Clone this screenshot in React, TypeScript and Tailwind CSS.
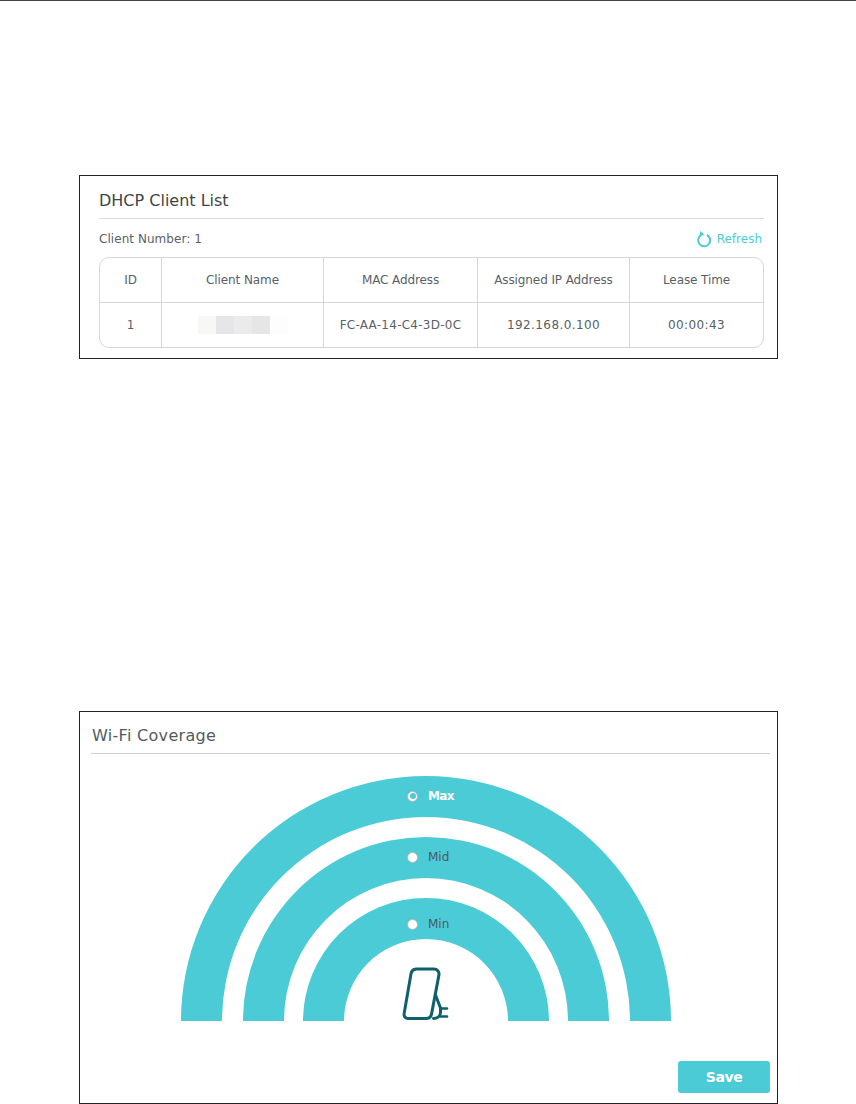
const cols = 'grid grid-cols-[62px_162px_154px_152px_1fr]'
const cell = 'flex items-center justify-center border-[#d6d6d6]'

const blurBlocks = ['bg-[#f7f7f5]', 'bg-[#e6e6e8]', 'bg-[#ebebeb]', 'bg-[#e6e6e6]', 'bg-[#fcfdfc]']

function RefreshIcon() {
	return (
		<svg width="16" height="18" viewBox="0 0 16 18" fill="none" className="shrink-0">
			<path d="M5 5.200a6 6 0 1 0 6-.2" stroke="#4acbd6" strokeWidth="2" />
			<path d="M4.200 1l4.300 3.600-5 2z" fill="#4acbd6" />
		</svg>
	)
}

function Radio({ label, active, className }: { label: string; active?: boolean; className: string }) {
	return (
		<div className={`absolute flex items-center gap-[10px] ${className}`}>
			<span className="flex h-[11px] w-[11px] items-center justify-center rounded-full border border-[#b9b3b8] bg-white">
				{active && <span className="h-[6px] w-[6px] rounded-full bg-[#4bccd7]" />}
			</span>
			<span className={`text-[12px] leading-[14px] ${active ? 'font-bold tracking-[-0.6px] text-white' : 'text-[#4c5a63]'}`}>{label}</span>
		</div>
	)
}

function Arcs() {
	return (
		<svg width="490" height="245" viewBox="0 0 490 245" fill="none" className="ml-[90px]">
			<path d="M0 245a245 245 0 0 1 490 0h-41a204 204 0 0 0-408 0z" fill="#4acbd6" />
			<path d="M62 245a183 184 0 0 1 366 0h-41a142 143 0 0 0-284 0z" fill="#4acbd6" />
			<path d="M122 245a123 123 0 0 1 246 0h-41a82 82 0 0 0-164 0z" fill="#4acbd6" />
			{/* extender */}
			<g transform="translate(-181 -776)" stroke="#0f5f6e" strokeWidth="3" strokeLinejoin="round" strokeLinecap="round">
				<path d="M416 969h18a5 5 0 0 1 5 5.600l-7.500 39.500a5.500 5.500 0 0 1-5.400 4.400h-18a4 4 0 0 1-4-4.800l7-40.500a5.500 5.500 0 0 1 4.900-4.200z" />
				<path d="M435.500 995l5 13v5a7 7 0 0 1-7 5.500" />
				<path d="M440.500 1008.500h6.500M440.500 1016.500h6.500" strokeWidth="2.600" />
			</g>
		</svg>
	)
}

export default function App() {
	return (
		<div className="h-[1104px] w-[856px] overflow-hidden border-t border-[#444444] bg-white font-['DejaVu_Sans',sans-serif] text-[12px] text-[#5a5f66]">
			<section className="ml-[79px] mt-[174px] h-[184px] w-[699px] border border-[#222222] pl-[19px] pr-[13px]">
				<h2 className="flex h-[43px] items-end border-b border-[#dcdcdc] pb-[7px] text-[16px] leading-[20px] text-[#444444]">
					DHCP Client List
				</h2>
				<div className="flex h-[38px] items-center justify-between pr-[2px] pt-[2px]">
					<span className="tracking-[0.05px]">Client Number: 1</span>
					<span className="flex items-center gap-[5px] text-[#4acbd6]">
						<RefreshIcon />
						Refresh
					</span>
				</div>
				<div className="h-[91px] overflow-hidden rounded-[10px] border border-[#d6d6d6]">
					<div className={`${cols} h-[45px] border-b border-[#d6d6d6] tracking-[-0.1px]`}>
						<div className={`${cell} border-r`}>ID</div>
						<div className={`${cell} border-r`}>Client Name</div>
						<div className={`${cell} border-r`}>MAC Address</div>
						<div className={`${cell} border-r`}>Assigned IP Address</div>
						<div className={cell}>Lease Time</div>
					</div>
					<div className={`${cols} h-[44px]`}>
						<div className={`${cell} border-r`}>1</div>
						<div className={`${cell} border-r`}>
							<div className="flex h-[18px]">
								{blurBlocks.map((b) => (
									<span key={b} className={`h-full w-[18px] ${b}`} />
								))}
							</div>
						</div>
						<div className={`${cell} border-r tracking-[0.25px]`}>FC-AA-14-C4-3D-0C</div>
						<div className={`${cell} border-r tracking-[0.4px]`}>192.168.0.100</div>
						<div className={`${cell} tracking-[0.4px]`}>00:00:43</div>
					</div>
				</div>
			</section>

			<section className="ml-[79px] mt-[352px] h-[393px] w-[699px] border border-[#222222] pl-[11px] pr-[7px]">
				<h2 className="flex h-[42px] items-end border-b border-[#cfcfcf] pb-[7px] pl-[1px] text-[16px] leading-[20px] tracking-[0.3px] text-[#555a60]">
					Wi-Fi Coverage
				</h2>
				<div className="relative mt-[22px] flex">
					<Arcs />
					<Radio label="Max" active className="left-[316px] top-[13px]" />
					<Radio label="Mid" className="left-[316px] top-[74px]" />
					<Radio label="Min" className="left-[316px] top-[141px]" />
				</div>
				<div className="mt-[40px] flex justify-end">
					<button className="h-[32px] w-[92px] rounded-[3px] bg-[#4acbd6] text-[14px] font-bold tracking-[-0.4px] text-white">Save</button>
				</div>
			</section>
		</div>
	)
}
